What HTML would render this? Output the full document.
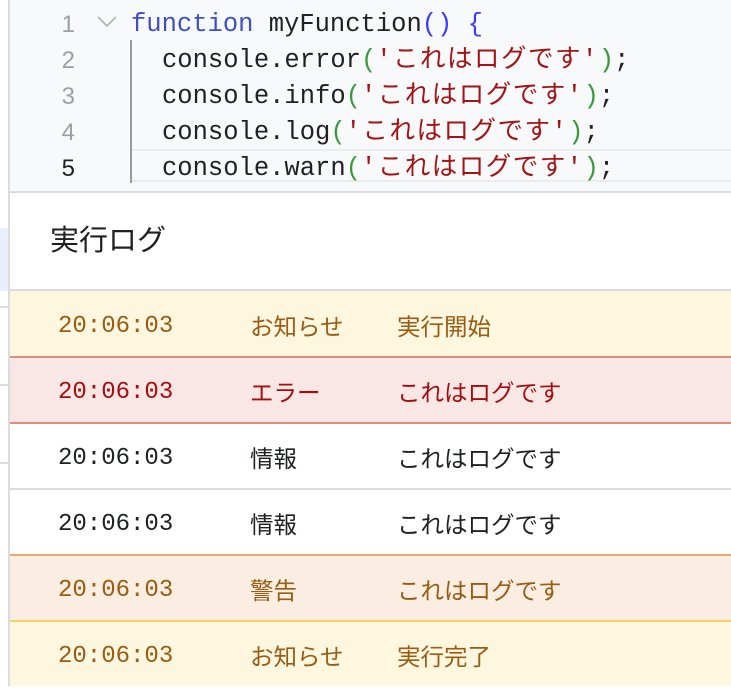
<!DOCTYPE html>
<html><head><meta charset="utf-8"><style>
*{margin:0;padding:0;box-sizing:border-box}
body{width:731px;height:686px;overflow:hidden;background:#fff;position:relative;font-family:"Liberation Sans","Noto Sans CJK JP",sans-serif}
.abs{position:absolute}
.code{left:10px;top:0;width:721px;height:193px;background:#f8f9fa;border-bottom:2px solid #dadce0}
.ln{position:absolute;left:0;width:65px;text-align:right;font-family:"Liberation Sans",sans-serif;font-size:24px;color:#9aa0a6;line-height:36px}
.cl{position:absolute;white-space:pre;font-family:"Liberation Mono","Noto Sans CJK JP",monospace;font-size:25.5px;color:#202124;line-height:36px}
.s{color:#a31515;letter-spacing:1.5px}.k{color:#3d4fc1}.p{color:#3b3bff}.g{color:#3a9a3a}
.row{position:absolute;left:10px;width:721px;height:66px;font-size:23.5px;line-height:66px}
.row span{position:absolute;top:3px}
.t{left:48px;font-family:"Liberation Mono",monospace;font-size:24px}
.c2{left:240px}.c3{left:387px}
.n{background:#fef7e0;color:#9a5b12}
.e{background:#f8e7e5;color:#a50e0e}
.i{background:#fff;color:#202124}
.w{background:#faeee3;color:#9a5b12}
</style></head><body>
<div class="abs" style="left:0;top:0;width:8px;height:686px;background:#fff"></div>
<div class="abs" style="left:0;top:228px;width:8px;height:63px;background:#e8f0fe"></div>
<div class="abs" style="left:0;top:306px;width:8px;height:2px;background:#dadce0"></div>
<div class="abs" style="left:0;top:384px;width:8px;height:2px;background:#dadce0"></div>
<div class="abs" style="left:0;top:462px;width:8px;height:2px;background:#dadce0"></div>
<div class="abs" style="left:8px;top:0;width:2px;height:686px;background:#dadce0"></div>
<div class="abs code">
 <div class="abs" style="left:121px;top:149px;width:600px;height:33px;border-top:2px solid #ececec;border-bottom:2px solid #ececec"></div>
 <div class="abs" style="left:120px;top:40px;width:2px;height:143px;background:#9a9a9a"></div>
 <div class="ln" style="top:7px">1</div>
 <div class="ln" style="top:43px">2</div>
 <div class="ln" style="top:79px">3</div>
 <div class="ln" style="top:115px">4</div>
 <div class="ln" style="top:151px;color:#202124">5</div>
 <svg class="abs" style="left:86px;top:14px" width="24" height="16"><path d="M2 3 L11 12 L20 3" fill="none" stroke="#b0b4b8" stroke-width="1.6"/></svg>
 <div class="cl" style="left:121px;top:7px"><span class="k">function</span> myFunction<span class="p">()</span> <span class="p">{</span></div>
 <div class="cl" style="left:152px;top:43px">console.error<span class="g">(</span><span class="s">'これはログです'</span><span class="g">)</span>;</div>
 <div class="cl" style="left:152px;top:79px">console.info<span class="g">(</span><span class="s">'これはログです'</span><span class="g">)</span>;</div>
 <div class="cl" style="left:152px;top:115px">console.log<span class="g">(</span><span class="s">'これはログです'</span><span class="g">)</span>;</div>
 <div class="cl" style="left:152px;top:151px">console.warn<span class="g">(</span><span class="s">'これはログです'</span><span class="g">)</span>;</div>
</div>
<div class="abs" style="left:50px;top:221px;font-size:29px;color:#202124;line-height:40px">実行ログ</div>
<div class="abs" style="left:10px;top:289px;width:721px;height:2px;background:#dadce0"></div>
<div class="row n" style="top:291px"><span class="t">20:06:03</span><span class="c2">お知らせ</span><span class="c3">実行開始</span></div>
<div class="abs" style="left:10px;top:356px;width:721px;height:2px;background:#e28a80"></div>
<div class="row e" style="top:358px;height:64px;line-height:64px"><span class="t">20:06:03</span><span class="c2">エラー</span><span class="c3">これはログです</span></div>
<div class="abs" style="left:10px;top:422px;width:721px;height:2px;background:#e28a80"></div>
<div class="row i" style="top:424px;height:64px;line-height:64px"><span class="t">20:06:03</span><span class="c2">情報</span><span class="c3">これはログです</span></div>
<div class="abs" style="left:10px;top:488px;width:721px;height:2px;background:#dadce0"></div>
<div class="row i" style="top:490px;height:64px;line-height:64px"><span class="t">20:06:03</span><span class="c2">情報</span><span class="c3">これはログです</span></div>
<div class="abs" style="left:10px;top:554px;width:721px;height:2px;background:#e8a870"></div>
<div class="row w" style="top:556px;height:64px;line-height:64px"><span class="t">20:06:03</span><span class="c2">警告</span><span class="c3">これはログです</span></div>
<div class="abs" style="left:10px;top:620px;width:721px;height:2px;background:#f4d36a"></div>
<div class="row n" style="top:622px;height:64px;line-height:64px"><span class="t">20:06:03</span><span class="c2">お知らせ</span><span class="c3">実行完了</span></div>
</body></html>
